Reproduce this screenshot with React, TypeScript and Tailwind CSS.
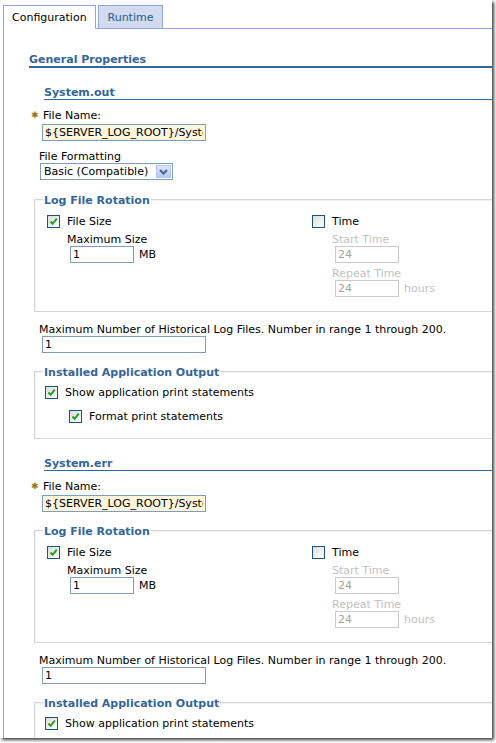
import type { ReactNode } from "react";

const font = "font-['DejaVu_Sans',Verdana,sans-serif] text-[11px] leading-[13px]";

function Check({ checked = false }: { checked?: boolean }) {
  return (
    <span className="flex h-[13px] w-[13px] shrink-0 items-center justify-center border border-[#1c5180] bg-linear-to-br from-[#dcdcd7] to-white">
      {checked && (
        <svg viewBox="0 0 11 11" className="h-[11px] w-[11px]">
          <path d="M2.5 5.5 L4.6 7.8 L8.8 2.6" stroke="#21a121" strokeWidth="2" fill="none" />
        </svg>
      )}
    </span>
  );
}

function CheckRow({ checked, label }: { checked?: boolean; label: string }) {
  return (
    <div className="flex items-center gap-[7px]">
      <Check checked={checked} />
      <span className="pt-px">{label}</span>
    </div>
  );
}

function Field({ value, cream, disabled, w }: { value: string; cream?: boolean; disabled?: boolean; w: string }) {
  return (
    <input
      readOnly
      value={value}
      className={`${w} h-[17px] border px-[2px] text-[11px] leading-[13px] outline-none ${
        cream ? "border-[#7f9db9] bg-[#fdf6df]" : "bg-white"
      } ${disabled ? "border-[#c9c9c9] text-[#a7a394]" : "text-black"} ${!cream && !disabled ? "border-[#7f9db9]" : ""}`}
    />
  );
}

function Group({ legend, children, className }: { legend: string; children: ReactNode; className: string }) {
  return (
    <div className={`ml-[5px] w-[520px] border border-[#d5d5d5] shadow-[inset_1px_1px_0_#f2f2f2] ${className}`}>
      <div className="-mt-[6px] ml-[8px] w-fit bg-white px-[1px] font-bold text-[#336699]">{legend}</div>
      {children}
    </div>
  );
}

function Section({ title, formatting, showFormat }: { title: string; formatting?: boolean; showFormat?: boolean }) {
  return (
    <>
      <div className="mt-[19px] ml-[15px] border-b border-[#336699] font-bold leading-[12px] text-[#336699]">{title}</div>

      <div className="mt-[9px] flex items-center">
        <span className="w-[14px] pl-[2px] text-[9px] text-[#8b7a22]">✱</span>
        <span>File Name:</span>
      </div>
      <div className="mt-[2px] ml-[13px]">
        <Field value="${SERVER_LOG_ROOT}/SystemOut.log" cream w="w-[164px]" />
      </div>

      {formatting && (
        <>
          <div className="mt-[9px] ml-[10px]">File Formatting</div>
          <div className="ml-[11px] flex h-[17px] w-[133px] items-center border border-[#7f9db9] bg-white">
            <span className="flex-1 pl-[3px]">Basic (Compatible)</span>
            <span className="mr-px flex h-[13px] w-[15px] items-center justify-center border border-[#b5c8f0] bg-linear-to-b from-[#dce6fb] to-[#b4c9f4]">
              <svg viewBox="0 0 9 6" className="h-[6px] w-[9px]">
                <path d="M1 1 L4.5 4.5 L8 1" stroke="#4d6185" strokeWidth="2" fill="none" />
              </svg>
            </span>
          </div>
        </>
      )}

      <Group legend="Log File Rotation" className={`${formatting ? "mt-[19px]" : "mt-[18px]"} pb-[14px]`}>
        <div className="mt-[7px] flex items-start pl-[12px]">
          <div className="w-[265px]">
            <CheckRow checked label="File Size" />
            <div className="mt-[5px] pl-[20px]">Maximum Size</div>
            <div className="flex items-center gap-[5px] pl-[23px]">
              <Field value="1" w="w-[64px]" />
              <span>MB</span>
            </div>
          </div>
          <div>
            <CheckRow label="Time" />
            <div className="mt-[5px] pl-[20px] text-[#c2c2c2]">Start Time</div>
            <div className="pl-[23px]">
              <Field value="24" disabled w="w-[64px]" />
            </div>
            <div className="mt-[4px] pl-[20px] text-[#c2c2c2]">Repeat Time</div>
            <div className="flex items-center gap-[5px] pl-[23px]">
              <Field value="24" disabled w="w-[64px]" />
              <span className="text-[#c2c2c2]">hours</span>
            </div>
          </div>
        </div>
      </Group>

      <div className="mt-[11px] ml-[10px]">Maximum Number of Historical Log Files. Number in range 1 through 200.</div>
      <div className="ml-[13px]">
        <Field value="1" w="w-[164px]" />
      </div>

      <Group legend="Installed Application Output" className="mt-[18px] pb-[15px]">
        <div className="mt-[6px] pl-[10px]">
          <CheckRow checked label="Show application print statements" />
          {showFormat && (
            <div className="mt-[10px] pl-[24px]">
              <CheckRow checked label="Format print statements" />
            </div>
          )}
        </div>
      </Group>
    </>
  );
}

export default function App() {
  return (
    <div className={`h-[743px] w-[496px] overflow-hidden bg-white ${font} text-black`}>
      <div className="flex h-[738px] w-[492px] flex-col overflow-hidden bg-white pt-[5px] shadow-[2px_2px_3px_rgba(0,0,0,0.75)]">
        <div className="flex items-end gap-[2px] pl-[3px]">
          <div className="relative z-10 -mb-px flex h-[24px] w-[93px] items-center border border-b-0 border-[#8fa8d8] bg-white pb-px pl-[8px]">
            Configuration
          </div>
          <div className="flex h-[23px] w-[65px] items-center justify-center border border-b-0 border-[#8fa8d8] bg-[#d1daee] text-[#1d5b8f]">
            Runtime
          </div>
        </div>
        <div className="ml-[3px] w-[560px] flex-1 border-t border-l border-[#8fa8d8] pl-[25px]">
          <div className="mt-[25px] border-b-2 border-[#336699] font-bold leading-[12px] text-[#336699]">General Properties</div>
          <Section title="System.out" formatting showFormat />
          <Section title="System.err" />
        </div>
      </div>
    </div>
  );
}
